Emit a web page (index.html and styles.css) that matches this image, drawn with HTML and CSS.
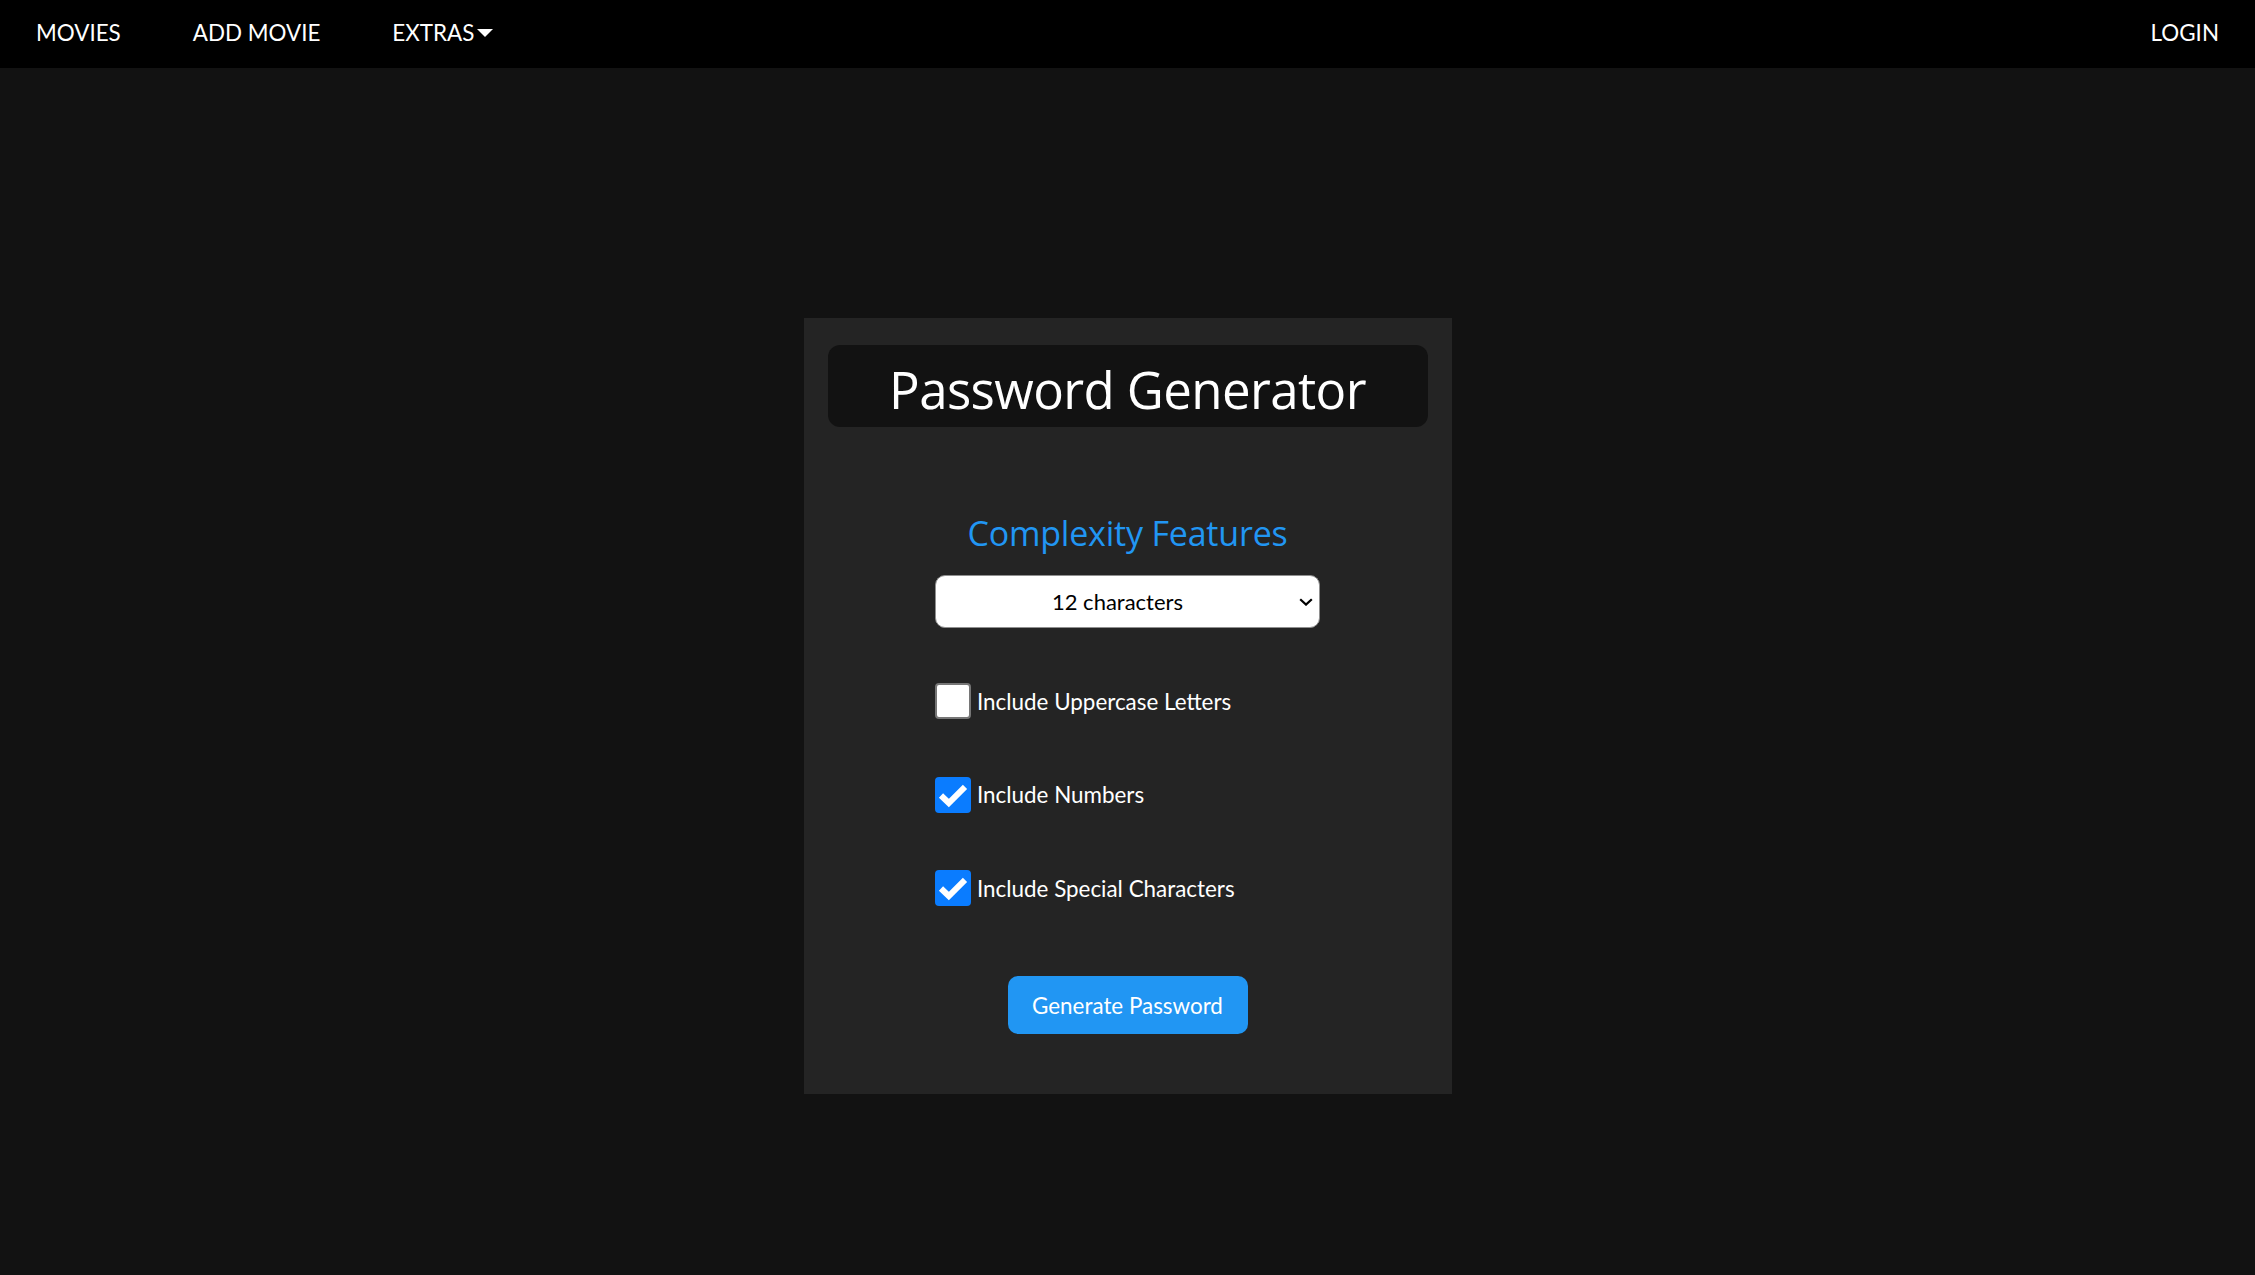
FILE: index.html
```html
<!DOCTYPE html>
<html lang="en">
<head>
<meta charset="utf-8">
<title>Password Generator</title>
<link rel="stylesheet" href="styles.css">
</head>
<body>
<nav class="topbar">
  <a class="nav-link" href="#">Movies</a>
  <a class="nav-link" href="#">Add Movie</a>
  <a class="nav-link dropdown" href="#">Extras<svg class="caret" viewBox="0 0 16 8" width="16" height="8"><path d="M0 0 H16 L8 8 Z" fill="#fff"/></svg></a>
  <a class="nav-link login" href="#">Login</a>
</nav>
<main class="page">
  <section class="card">
    <div class="title-box"><h1 class="title">Password Generator</h1></div>
    <div class="form">
      <h2 class="subtitle">Complexity Features</h2>
      <div class="select-wrap">
        <select class="length-select">
          <option>8 characters</option>
          <option selected>12 characters</option>
          <option>16 characters</option>
          <option>20 characters</option>
        </select>
        <svg class="chevron" viewBox="0 0 14 8" width="14" height="8"><path d="M1.2 1.2 L7 6.6 L12.8 1.2" fill="none" stroke="#000" stroke-width="2.2"/></svg>
      </div>
      <label class="option">
        <input class="opt-input" type="checkbox">
        <span class="box"><svg class="tick" viewBox="0 0 36 36" width="36" height="36"><path d="M6 18.5 L13.8 26 L30 9.8" fill="none" stroke="#fff" stroke-width="6" stroke-linejoin="miter"/></svg></span>
        <span class="opt-text">Include Uppercase Letters</span>
      </label>
      <label class="option">
        <input class="opt-input" type="checkbox" checked>
        <span class="box"><svg class="tick" viewBox="0 0 36 36" width="36" height="36"><path d="M6 18.5 L13.8 26 L30 9.8" fill="none" stroke="#fff" stroke-width="6" stroke-linejoin="miter"/></svg></span>
        <span class="opt-text">Include Numbers</span>
      </label>
      <label class="option">
        <input class="opt-input" type="checkbox" checked>
        <span class="box"><svg class="tick" viewBox="0 0 36 36" width="36" height="36"><path d="M6 18.5 L13.8 26 L30 9.8" fill="none" stroke="#fff" stroke-width="6" stroke-linejoin="miter"/></svg></span>
        <span class="opt-text">Include Special Characters</span>
      </label>
      <button class="generate" type="button">Generate Password</button>
    </div>
  </section>
</main>
</body>
</html>
```
FILE: styles.css
```css
html, body {
  margin: 0;
  padding: 0;
}
body {
  background: #121212;
  font-family: Lato, "Liberation Sans", sans-serif;
  color: #fff;
  min-height: 1275px;
}
.topbar {
  display: flex;
  align-items: center;
  height: 68px;
  background: #000;
}
.nav-link {
  box-sizing: border-box;
  display: flex;
  align-items: center;
  padding: 0 36px 3px;
  height: 68px;
  color: #fff;
  text-decoration: none;
  text-transform: uppercase;
  font-size: 22.4px;
}
.caret {
  margin-left: 3px;
  margin-top: 1px;
}
.login {
  margin-left: auto;
}
.page {
  display: flex;
  justify-content: center;
  padding-top: 250px;
}
.card {
  box-sizing: border-box;
  width: 648px;
  height: 776px;
  padding: 27px 24px 0;
  background: #242424;
}
.title-box {
  box-sizing: border-box;
  display: flex;
  align-items: center;
  justify-content: center;
  height: 82px;
  padding-top: 6px;
  background: #121212;
  border-radius: 12px;
}
.title {
  margin: 0;
  font-family: "Open Sans", "Noto Sans", sans-serif;
  font-weight: 400;
  font-size: 51px;
  line-height: 1;
  letter-spacing: -0.6px;
  color: #fff;
}
.form {
  display: flex;
  flex-direction: column;
  align-items: flex-start;
  width: 385px;
  margin: 0 auto;
}
.subtitle {
  align-self: center;
  margin: 86px 0 0;
  font-family: "Open Sans", "Noto Sans", sans-serif;
  font-weight: 400;
  font-size: 34px;
  line-height: 40px;
  letter-spacing: -0.2px;
  color: #2196f3;
}
.select-wrap {
  position: relative;
  width: 385px;
  height: 53px;
  margin-top: 22px;
}
.length-select {
  box-sizing: border-box;
  display: block;
  width: 385px;
  height: 53px;
  margin: 0;
  padding: 0 20px 0 0;
  border: 1px solid #8f8f8f;
  border-radius: 10px;
  background: #fff;
  color: #000;
  font-family: Lato, "Liberation Sans", sans-serif;
  font-size: 22px;
  text-align: center;
  text-align-last: center;
  -webkit-appearance: none;
  appearance: none;
  outline: none;
}
.chevron {
  position: absolute;
  right: 7px;
  top: 23px;
  pointer-events: none;
}
.option {
  display: flex;
  align-items: center;
  height: 36px;
  margin-top: 55px;
  cursor: pointer;
}
.option + .option {
  margin-top: 57.5px;
}
.opt-input {
  display: none;
}
.box {
  box-sizing: border-box;
  display: flex;
  align-items: center;
  justify-content: center;
  width: 36px;
  height: 36px;
  border: 2px solid #767676;
  border-radius: 4px;
  background: #fff;
}
.tick {
  display: none;
}
.opt-input:checked + .box {
  border: none;
  background: #0a7cff;
}
.opt-input:checked + .box .tick {
  display: block;
}
.opt-text {
  margin-left: 6px;
  font-size: 22.4px;
  color: #fff;
}
.generate {
  align-self: center;
  width: 240px;
  height: 58px;
  margin-top: 70px;
  border: none;
  border-radius: 10px;
  background: #2196f3;
  color: #fff;
  font-family: Lato, "Liberation Sans", sans-serif;
  font-size: 22.4px;
  cursor: pointer;
}
```
